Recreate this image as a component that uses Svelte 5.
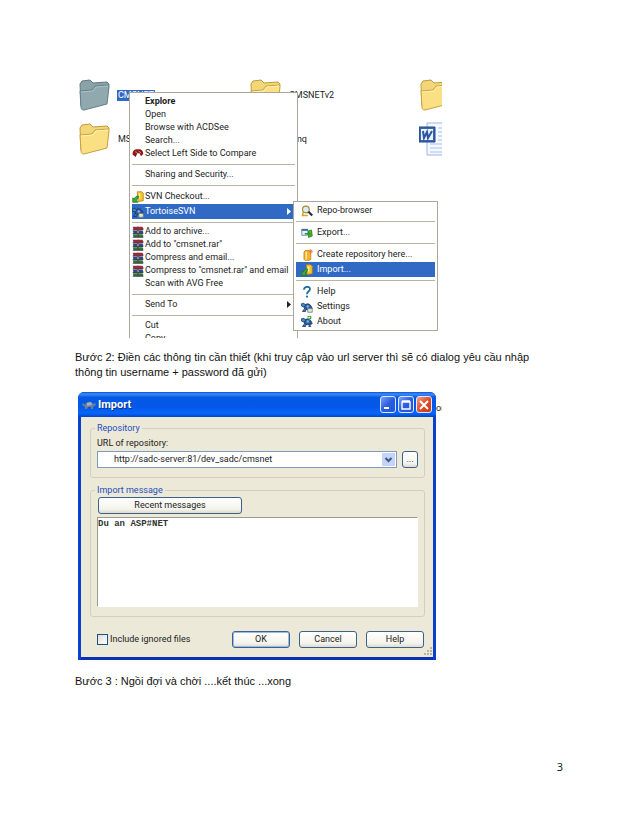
<script>
  let url = $state('http://sadc-server:81/dev_sadc/cmsnet');
  let message = $state('Du an ASP#NET');
  let includeIgnored = $state(false);

  const files = [
    { name: 'CMSNET', icon: 'folder', selected: true },
    { name: 'CMSNETv2', icon: 'folder' },
    { name: '', icon: 'folder' },
    { name: 'MS', icon: 'folder' },
    { name: 'hmq', icon: '' },
    { name: '', icon: 'word' }
  ];

  const contextMenu = [
    { label: 'Explore', bold: true },
    { label: 'Open' },
    { label: 'Browse with ACDSee' },
    { label: 'Search...' },
    { label: 'Select Left Side to Compare', icon: 'compare' },
    { sep: true },
    { label: 'Sharing and Security...' },
    { sep: true },
    { label: 'SVN Checkout...', icon: 'checkout', tall: true },
    { label: 'TortoiseSVN', icon: 'tortoise', tall: true, active: true, sub: true },
    { sep: true, tight: true },
    { label: 'Add to archive...', icon: 'rar' },
    { label: 'Add to "cmsnet.rar"', icon: 'rar' },
    { label: 'Compress and email...', icon: 'rar' },
    { label: 'Compress to "cmsnet.rar" and email', icon: 'rar' },
    { label: 'Scan with AVG Free' },
    { sep: true },
    { label: 'Send To', sub: true },
    { sep: true },
    { label: 'Cut' },
    { label: 'Copy' }
  ];

  const svnMenu = [
    { label: 'Repo-browser', icon: 'browser' },
    { sep: true },
    { label: 'Export...', icon: 'export' },
    { sep: true },
    { label: 'Create repository here...', icon: 'create' },
    { label: 'Import...', icon: 'import', active: true },
    { sep: true },
    { label: 'Help', icon: 'help' },
    { label: 'Settings', icon: 'settings' },
    { label: 'About', icon: 'about' }
  ];
</script>

{#snippet icon(name)}
  <svg class="icon" viewBox="0 0 16 16" aria-hidden="true">
    {#if name === 'compare'}
      <path d="M1 9C0 4 4 1 8 2c4-1 7 2 7 6l-3 3-2-4-3 0-2 5z" fill="#8e1616" />
      <path d="M4 5l3 1M9 4l3 3" stroke="#e9b0a6" />
    {:else if name === 'checkout' || name === 'import'}
      <path d="M7 1l6 0 2 2v10l-7 1z" fill="#f3c52e" stroke="#b07d10" />
      <path d="M9 3h2v7H9z" fill="#fff0a0" />
      <path d="M1 15V9l2 2c1-3 3-5 6-4l-1 3c-2 0-2 2-2 3l2 2z" fill="#3cb034" stroke="#1c731b" />
    {:else if name === 'rar'}
      <path d="M1 1h13l1 2v2H2z" fill="#a3263f" />
      <path d="M1 6h13l1 2v2H2z" fill="#2d468f" />
      <path d="M1 11h13l1 2v2H2z" fill="#267b44" />
      <path d="M1 5h14M1 10h14M1 15h14" stroke="#221c22" />
      <path d="M7 1h2v14H7z" fill="#6d4534" />
      <path d="M7 7h2v2H7z" fill="#c9b08c" />
    {:else if name === 'browser'}
      <path d="M3 9l-1 5h7" fill="none" stroke="#d9a324" stroke-width="2" />
      <circle cx="6.500" cy="6" r="4.500" fill="#d9edf8" stroke="#a68c2c" stroke-width="1.6" />
      <path d="M10 9l5 5" stroke="#20304a" stroke-width="3" />
    {:else if name === 'export'}
      <path d="M1 3h8v8H1z" fill="#e8f1fa" stroke="#4f7397" />
      <path d="M1 3h8v2H1z" fill="#27578e" />
      <path d="M10 5l4-1 1 8-5 2z" fill="#49b32e" stroke="#207a18" />
      <path d="M5 8h5V6l3 3-3 3v-2H5z" fill="#2b9829" />
    {:else if name === 'create'}
      <path d="M4 4l2-2h5l2 2v10l-2 1H5l-1-1z" fill="#f4b631" stroke="#c07713" />
      <path d="M6 4h2v10H6z" fill="#ffe897" />
      <path d="M13 0v6M10 3h6M11 1l4 4M15 1l-4 4" stroke="#ec6940" />
    {:else if name === 'help'}
      <path d="M4 5c0-5 8-5 8-1 0 3-4 3-4 7" fill="none" stroke="#1d6f9e" stroke-width="2.4" />
      <circle cx="8" cy="14" r="1.5" fill="#1d6f9e" />
    {:else}
      <path d="M4 8c0-4 6-6 9-2l2 4-3 2-7-1z" fill="#2c5b9d" stroke="#132d5b" />
      <path d="M0 4l4-1 2 3-2 2-3-1z" fill="#4a88c4" stroke="#173865" />
      <path d="M4 11l-2 3h4l1-3M11 11l2 3h-3" fill="#3f77b2" stroke="#132d5b" />
      <path d="M7 7l2-2 2 2-1 2H8z" fill="#78acd9" />
      {#if name === 'about'}
        <path d="M9 2c1-3 5-2 4 1l-2 1v2" fill="none" stroke="#35a535" stroke-width="1.6" />
      {:else}
        <path d="M9 10h6v5H9z" fill="#f1e7b3" stroke="#5876a2" />
      {/if}
    {/if}
  </svg>
{/snippet}

{#snippet menuItems(items)}
  {#each items as item}
    {#if item.sep}
      <li class="sep" class:tight={item.tight} role="separator"></li>
    {:else}
      <li role="none">
        <button
          type="button"
          role="menuitem"
          class:bold={item.bold}
          class:tall={item.tall}
          class:active={item.active}
        >
          <span class="slot">{#if item.icon}{@render icon(item.icon)}{/if}</span>
          <span>{item.label}</span>
          {#if item.sub}
            <svg class="arrow" viewBox="0 0 4 7" aria-hidden="true"><path d="M0 0l4 3.5L0 7z" fill="currentColor" /></svg>
          {/if}
        </button>
      </li>
    {/if}
  {/each}
{/snippet}

<svelte:head>
  <title>Import</title>
</svelte:head>

<main class="page">
  <section class="explorer">
    <div class="files">
      {#each files as file}
        <div class="file">
          <svg class="file-icon" class:dim={file.selected} viewBox="0 0 32 34" aria-hidden="true">
            {#if file.icon === 'folder'}
              <path class="back" d="M2 6l2-3 8-1 3 3 14-1 2 2-3 19L6 31l-3-3z" />
              <path class="front" d="M2 13l12-1 3-4 13-1c1 0 1 1 1 2l-2 17-23 6c-2 0-3-1-3-3z" />
              <path class="shine" d="M3 14l12-1 3-4 12-1" />
            {:else if file.icon === 'word'}
              <path d="M8 1h25v32H8z" fill="#f4f8ff" stroke="#9bb6df" />
              <path d="M19 6h13M19 10h13M19 14h13M19 18h13M11 22h21M11 26h21M11 30h21" stroke="#a9c2e6" />
              <path d="M0 5h16v15H0z" fill="#3a64ae" stroke="#244987" />
              <path d="M2 7h12v11H2z" fill="#e9f1fc" />
              <path d="M4 9l1 7 3-6 1 6 4-7" fill="none" stroke="#2c56a4" stroke-width="2" />
            {/if}
          </svg>
          <span class="name" class:selected={file.selected}>{file.name}</span>
        </div>
      {/each}
    </div>

    <ul class="menu context" role="menu">
      {@render menuItems(contextMenu)}
    </ul>
    <ul class="menu svn" role="menu">
      {@render menuItems(svnMenu)}
    </ul>
  </section>

  <p>
    Bước 2: Điền các thông tin cần thiết (khi truy cập vào url server thì sẽ có dialog yêu cầu nhập
    thông tin username + password đã gửi)
  </p>

  <section class="shot">
    <form class="dialog" onsubmit={(e) => e.preventDefault()}>
      <header>
        <svg class="logo" viewBox="0 0 14 10" aria-hidden="true">
          <path d="M3 5c1-4 7-4 8-1l2-1 1 2-3 2v2H9V7H6L5 9H3V7L0 5l1-2z" fill="#6d7f93" />
          <path d="M5 3l4-1 1 3-5 1z" fill="#a5b2be" />
        </svg>
        <h1>Import</h1>
        <button type="button" class="win" aria-label="Minimize">
          <svg viewBox="0 0 14 14"><path d="M3 10h5" stroke="#fff" stroke-width="2" /></svg>
        </button>
        <button type="button" class="win" aria-label="Maximize">
          <svg viewBox="0 0 14 14"><path d="M3 4h8v7H3zM3 3h8" fill="none" stroke="#fff" stroke-width="1.4" /></svg>
        </button>
        <button type="button" class="win close" aria-label="Close">
          <svg viewBox="0 0 14 14"><path d="M3 3l8 8M11 3l-8 8" stroke="#fff" stroke-width="2" /></svg>
        </button>
      </header>

      <div class="body">
        <fieldset>
          <legend>Repository</legend>
          <label for="url">URL of repository:</label>
          <div class="url-row">
            <div class="combo">
              <select id="url" bind:value={url}>
                <option>http://sadc-server:81/dev_sadc/cmsnet</option>
              </select>
              <svg class="drop" viewBox="0 0 13 13" aria-hidden="true">
                <rect width="13" height="13" rx="1" fill="#c3d3f9" />
                <path d="M3.500 5l3 3 3-3" fill="none" stroke="#41587d" stroke-width="2" />
              </svg>
            </div>
            <button type="button" class="browse">...</button>
          </div>
        </fieldset>

        <fieldset class="message">
          <legend>Import message</legend>
          <button type="button" class="recent">Recent messages</button>
          <textarea aria-label="Import message" spellcheck="false" bind:value={message}></textarea>
        </fieldset>

        <footer>
          <label class="check">
            <input type="checkbox" bind:checked={includeIgnored} />
            Include ignored files
          </label>
          <button type="submit" class="ok">OK</button>
          <button type="button">Cancel</button>
          <button type="button">Help</button>
        </footer>
        <svg class="grip" viewBox="0 0 9 9" aria-hidden="true">
          <path d="M7 0h2v2H7zM7 3h2v2H7zM4 3h2v2H4zM7 6h2v2H7zM4 6h2v2H4zM1 6h2v2H1z" fill="#b8b4a2" />
        </svg>
      </div>
    </form>
    <span class="behind">or</span>
  </section>

  <p>Bước 3 : Ngồi đợi và chời ....kết thúc ...xong</p>

  <div class="page-no">3</div>
</main>

<style>
  :global(body) {
    margin: 0;
    background: #fff;
  }

  .page {
    padding: 75px 75px 50px;
    font-family: 'Liberation Sans', Arial, sans-serif;
    font-size: 11px;
    line-height: 15px;
    color: #111;
  }

  p {
    margin: 0;
    padding-right: 12px;
  }

  .explorer,
  .shot {
    font-family: Roboto, Tahoma, sans-serif;
    font-size: 9px;
    line-height: 13px;
    color: #222;
  }

  button,
  select {
    font: inherit;
    color: inherit;
  }

  /* explorer window with the two menus */
  .explorer {
    position: relative;
    max-width: 364px;
    height: 263px;
    margin: 0 0 12px 3px;
    overflow: hidden;
  }

  .files {
    display: grid;
    grid-template-columns: 171px 170px 171px;
    row-gap: 10px;
    padding-top: 3px;
  }

  .file {
    display: flex;
    align-items: center;
    gap: 7px;
  }

  .file-icon {
    flex: none;
    width: 32px;
    height: 34px;
  }

  .back {
    fill: #f2d778;
    stroke: #c09a3c;
  }

  .front {
    fill: #fbdf83;
    stroke: #c9a040;
  }

  .shine {
    fill: none;
    stroke: #fff3b8;
  }

  .dim .back {
    fill: #8aa3a8;
    stroke: #5f7a80;
  }

  .dim .front {
    fill: #8fa9ae;
    stroke: #64808a;
  }

  .dim .shine {
    stroke: #adc2c6;
  }

  .name {
    padding: 0 1px;
    line-height: 11px;
  }

  .name.selected {
    background: #316ac5;
    color: #fff;
  }

  .menu {
    position: absolute;
    box-sizing: border-box;
    margin: 0;
    padding: 1px 2px;
    list-style: none;
    background: #fff;
    border: 1px solid #aca899;
  }

  .context {
    top: 17px;
    left: 51px;
    width: 169px;
    padding-top: 2px;
  }

  .svn {
    top: 126px;
    left: 215px;
    width: 145px;
  }

  .menu button {
    display: flex;
    align-items: center;
    width: 100%;
    height: 13px;
    padding: 0 4px 0 0;
    border: 0;
    background: none;
    text-align: left;
    white-space: nowrap;
  }

  .menu button.tall,
  .svn button {
    height: 15px;
  }

  .menu button.bold {
    font-weight: bold;
  }

  .menu button.active {
    background: #316ac5;
    color: #fff;
  }

  .slot {
    display: flex;
    flex: none;
    width: 13px;
  }

  .svn .slot {
    justify-content: center;
    width: 21px;
  }

  .icon {
    width: 12px;
    height: 12px;
  }

  .arrow {
    width: 4px;
    height: 7px;
    margin-left: auto;
  }

  .sep {
    display: flex;
    align-items: center;
    height: 8px;
  }

  .sep.tight {
    height: 6px;
  }

  .svn .sep {
    height: 7px;
  }

  .sep::after {
    content: '';
    flex: 1;
    height: 1px;
    background: #b9b5a5;
  }

  /* import dialog */
  .shot {
    display: flex;
    max-width: 364px;
    margin: 12px 0 14px 3px;
    overflow: hidden;
  }

  .behind {
    flex: none;
    width: 6px;
    padding-top: 10px;
  }

  .dialog {
    flex: 1;
    border-radius: 6px 6px 0 0;
    background: #0a3fd0;
  }

  header {
    display: flex;
    align-items: center;
    gap: 2px;
    height: 25px;
    padding: 0 4px;
    border-radius: 6px 6px 0 0;
    background: linear-gradient(#0a4fd4, #3c8cf8 8%, #0558e4 22%, #0458ea 60%, #0665fa 85%, #0344c4);
  }

  .logo {
    width: 14px;
    height: 10px;
  }

  h1 {
    flex: 1;
    margin: 0;
    font-size: 11px;
    line-height: 14px;
    color: #fff;
    text-shadow: 1px 1px #0a318e;
  }

  .win {
    width: 16px;
    height: 17px;
    padding: 0;
    border: 1px solid #dce8ff;
    border-radius: 3px;
    background: linear-gradient(135deg, #7aa0f4, #2a5de0 50%, #2455d8);
  }

  .win.close {
    background: linear-gradient(135deg, #f0a088, #dd4f28 50%, #c63a12);
  }

  .win svg {
    display: block;
    width: 14px;
    height: 14px;
  }

  .body {
    position: relative;
    margin: 0 3px;
    padding: 5px 8px 9px 9px;
    border-bottom: 3px solid #0a2fb5;
    background: #ece9d8;
  }

  fieldset {
    min-width: 0;
    margin: 0 0 6px;
    padding: 0 6px 9px;
    border: 1px solid #d0d0bf;
    border-radius: 3px;
  }

  legend {
    margin-left: -2px;
    padding: 0 2px;
    color: #1c4fc0;
  }

  fieldset label {
    display: block;
    line-height: 16px;
  }

  .url-row {
    display: flex;
    gap: 5px;
  }

  .combo {
    position: relative;
    flex: 1;
  }

  select {
    appearance: none;
    box-sizing: border-box;
    width: 100%;
    height: 17px;
    padding: 0 16px;
    border: 1px solid #7f9db9;
    border-radius: 0;
    background: #fff;
  }

  .drop {
    position: absolute;
    top: 2px;
    right: 2px;
    width: 13px;
    height: 13px;
    pointer-events: none;
  }

  .browse,
  .recent,
  footer button {
    box-sizing: border-box;
    height: 17px;
    padding: 0;
    border: 1px solid #3d6288;
    border-radius: 3px;
    background: linear-gradient(#fff, #f4f3ec 75%, #dedbd0);
    line-height: 13px;
  }

  .browse {
    width: 16px;
  }

  .recent {
    display: block;
    width: 144px;
    margin: 0 0 3px 1px;
  }

  textarea {
    display: block;
    box-sizing: border-box;
    width: 100%;
    height: 90px;
    padding: 0;
    border: 1px solid #fff;
    border-top-color: #9d9a8c;
    border-left-color: #9d9a8c;
    background: #fff;
    font: bold 9px/12px 'Liberation Mono', monospace;
    color: #333;
    resize: none;
  }

  .message {
    margin-bottom: 14px;
  }

  footer {
    display: flex;
    align-items: center;
    gap: 9px;
    padding-right: 1px;
  }

  footer button {
    width: 58px;
  }

  footer .ok {
    box-shadow: inset 0 0 0 1px #9cb9ee;
  }

  .check {
    display: flex;
    flex: 1;
    align-items: center;
    gap: 2px;
    padding-left: 7px;
  }

  .check input {
    appearance: none;
    box-sizing: border-box;
    width: 11px;
    height: 11px;
    margin: 0;
    border: 1px solid #1c5180;
    background: linear-gradient(135deg, #dcdcd7, #fff);
  }

  .check input:checked {
    background: #21a121;
  }

  .grip {
    position: absolute;
    right: 1px;
    bottom: 1px;
    width: 9px;
    height: 9px;
  }

  .page-no {
    margin-top: 70px;
    font-family: 'Open Sans', Calibri, sans-serif;
    font-size: 11px;
    text-align: right;
  }
</style>
